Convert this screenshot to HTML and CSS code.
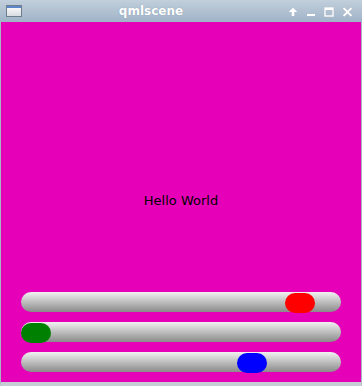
FILE: index.html
```html
<!DOCTYPE html>
<html lang="en">
   <head>
      <meta charset="UTF-8" />
      <meta name="viewport" content="width=device-width, initial-scale=1.0" />
      <title>qmlscene</title>
      <link rel="stylesheet" href="styles.css">
   </head>
   <body>
      <div class="window">
         <header class="titlebar">
            <svg class="app-icon" width="16" height="12" viewBox="0 0 16 12">
               <defs>
                  <linearGradient id="pane" x1="0" y1="0" x2="0" y2="1">
                     <stop offset="0" stop-color="#ffffff" />
                     <stop offset="1" stop-color="#d6dbe0" />
                  </linearGradient>
               </defs>
               <rect x="0.5" y="0.5" width="15" height="11" fill="url(#pane)" stroke="#6f7e8e" />
               <rect x="1" y="1" width="14" height="2" fill="#5b86c9" />
            </svg>
            <div class="title">qmlscene</div>
            <div class="controls">
               <svg width="10" height="10" viewBox="0 0 10 10">
                  <path d="M5 0.5 L9.5 5 L6.5 5 L6.5 9 L3.5 9 L3.5 5 L0.5 5 Z" fill="#fff" />
               </svg>
               <svg width="10" height="10" viewBox="0 0 10 10">
                  <rect x="1" y="7" width="8" height="2" fill="#fff" />
               </svg>
               <svg width="10" height="10" viewBox="0 0 10 10">
                  <rect x="1" y="1" width="8" height="8" fill="none" stroke="#fff" stroke-width="1.6" />
                  <rect x="1" y="1" width="8" height="2" fill="#fff" />
               </svg>
               <svg width="11" height="10" viewBox="0 0 11 10">
                  <path d="M1.5 1 L9.5 9 M9.5 1 L1.5 9" stroke="#fff" stroke-width="2.2" />
               </svg>
            </div>
         </header>
         <main class="scene">
            <div class="hello">Hello World</div>
            <div class="sliders">
               <div class="track"><div class="handle red" style="left: 264px"></div></div>
               <div class="track"><div class="handle green" style="left: 0px"></div></div>
               <div class="track"><div class="handle blue" style="left: 216px"></div></div>
            </div>
         </main>
      </div>
   </body>
</html>
```

FILE: styles.css
```css
body {
   margin: 0;
   padding: 0;
}

div.window {
   width: 362px;
   height: 386px;
   box-sizing: border-box;
   border-left: 1px solid #a9b6c3;
   border-right: 1px solid #a9b6c3;
   border-bottom: 4px solid #c6ced3;
   font-family: 'DejaVu Sans', sans-serif;
   display: flex;
   flex-direction: column;
   background-color: #e600b8;
}

header.titlebar {
   height: 22px;
   margin: 0 -1px;
   display: flex;
   align-items: flex-start;
   background: linear-gradient(#c2cfdc, #9fb3c7);
}

svg.app-icon {
   margin: 5px 0 0 6px;
}

div.title {
   flex: 1;
   padding: 4px 8px 0 0;
   text-align: center;
   font-size: 12px;
   font-weight: bold;
   line-height: 14px;
   color: #fff;
   text-shadow: 0 0 1px #7d8ea0;
}

div.controls {
   display: flex;
   gap: 8px;
   margin: 7px 9px 0 0;
}

div.controls svg {
   filter: drop-shadow(0 0 0.6px #6e8196);
}

main.scene {
   flex: 1;
   display: flex;
   flex-direction: column;
}

div.hello {
   margin-top: 171px;
   text-align: center;
   font-size: 13px;
   line-height: 15px;
   color: #000;
}

div.sliders {
   margin: auto 20px 10px;
   display: flex;
   flex-direction: column;
   gap: 10px;
}

div.track {
   position: relative;
   height: 20px;
   border-radius: 10px;
   background: linear-gradient(#f2f2f2, #8a8a8a);
}

div.handle {
   position: absolute;
   top: 1px;
   width: 30px;
   height: 20px;
   border-radius: 10px;
}

.red {
   background-color: #ff0000;
}

.green {
   background-color: #008000;
}

.blue {
   background-color: #0000ff;
}
```
